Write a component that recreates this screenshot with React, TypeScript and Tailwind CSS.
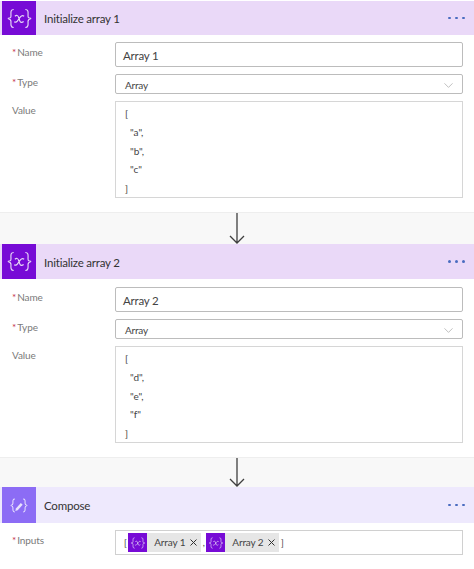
import React from 'react';
import { ChevronDown } from 'lucide-react';

const font = 'font-["Lato","Open_Sans",sans-serif]';

const Braces = () => (
  <>
    <path d="M7.5 3C4.8 3 5.4 5.6 5.4 7.6S5 9.6 3 10c2 .4 2.4 1 2.4 2.4S4.8 17 7.5 17" />
    <path d="M16.5 3c2.7 0 2.1 2.6 2.1 4.6s.4 2 2.4 2.4c-2 .4-2.4 1-2.4 2.4s.6 4.6-2.1 4.6" />
  </>
);

const VarGlyph = ({ size }: { size: number }) => (
  <svg width={size} height={size} viewBox="0 0 24 20" fill="none" stroke="#e6d8f6" strokeWidth="0.9">
    <Braces />
    <path d="M8.4 8.2c1.3-1 2.4-.7 2.8.6l1.1 3.2c.4 1.1 1.5 1.4 2.9.3M15.6 8.2c-1.2-.8-2.2-.3-2.9.6l-2.4 3.3c-.7.9-1.4 1-2.4.4" />
  </svg>
);

const VarIcon = ({ small = false }: { small?: boolean }) =>
  small ? (
    <span className="flex items-center justify-center w-[19px] h-[19px] bg-[#770bd6]">
      <VarGlyph size={18} />
    </span>
  ) : (
    <span className="flex items-center justify-center w-[34px] h-full bg-[#770bd6]">
      <VarGlyph size={31} />
    </span>
  );

const ComposeIcon = () => (
  <span className="flex items-center justify-center w-[34px] h-full bg-[#8c6cf5]">
    <svg width="22" height="19" viewBox="0 0 24 20" fill="none" stroke="#e8e2fc" strokeWidth="1.1">
      <Braces />
      <path d="M8.6 13.4l5.4-6 2 1.8-5.4 5.9-2.6.8z" fill="#e8e2fc" stroke="none" />
    </svg>
  </span>
);

const Dots = () => (
  <span className="flex gap-[4.5px] mr-[9.5px]">
    <span className="w-[2.5px] h-[2.5px] rounded-full bg-[#4a6cc0]" />
    <span className="w-[2.5px] h-[2.5px] rounded-full bg-[#4a6cc0]" />
    <span className="w-[2.5px] h-[2.5px] rounded-full bg-[#4a6cc0]" />
  </span>
);

const Header = ({
  title,
  light = false,
  height,
  icon,
}: {
  title: string;
  light?: boolean;
  height: string;
  icon: React.ReactNode;
}) => (
  <div className={`flex items-center pl-[2px] ${height} ${light ? 'bg-[#eee9fd]' : 'bg-[#ead9f8]'}`}>
    {icon}
    <span className="ml-[8px] flex-1 pt-[2px] text-[11.5px] tracking-[-0.2px] text-[#333]">{title}</span>
    <Dots />
  </div>
);

const Label = ({ text, required = false }: { text: string; required?: boolean }) => (
  <div className="w-[115px] pl-[12px] text-[10px] tracking-[-0.1px] leading-[14px] text-[#7a7a7a]">
    {required && <span className="text-[#c4314b] mr-px">*</span>}
    {text}
  </div>
);

const VariableCard = ({
  title,
  name,
  lines,
  headerHeight,
  top,
}: {
  title: string;
  name: string;
  lines: string[];
  headerHeight: string;
  top: string;
}) => (
  <div>
    <Header title={title} height={headerHeight} icon={<VarIcon />} />
    <div className={`pb-[14px] pr-[11px] flex flex-col gap-[7px] ${top}`}>
      <div className="flex">
        <div className="pt-[3px]"><Label text="Name" required /></div>
        <div className="flex-1 h-[25px] border border-[#bcbcbc] rounded-[2px] pl-[7px] pt-[2px] flex items-center text-[11.5px] tracking-[-0.2px] text-[#444]">
          {name}
        </div>
      </div>
      <div className="flex">
        <div className="pt-[1px]"><Label text="Type" required /></div>
        <div className="flex-1 h-[20px] border border-[#bcbcbc] rounded-[2px] pl-[9px] pr-[6px] flex items-center justify-between text-[10px] tracking-[-0.2px] text-[#444]">
          <span className="pt-[2px]">Array</span>
          <ChevronDown size={15} strokeWidth={1} className="mt-[2px] text-[#9a9a9a]" />
        </div>
      </div>
      <div className="flex">
        <div className="pt-[2px]"><Label text="Value" /></div>
        <div className="flex-1 h-[97px] border border-[#d6d6d6] pl-[9px] pt-[2px] text-[10px] leading-[18.75px] text-[#444]">
          <div>[</div>
          {lines.map((l) => (
            <div key={l} className="pl-[5px]">{l}</div>
          ))}
          <div>]</div>
        </div>
      </div>
    </div>
  </div>
);

const Connector = ({ height }: { height: number }) => (
  <div className="bg-[#f8f8f8] border-t border-[#eeeeee] flex justify-center" style={{ height }}>
    <svg width="18" height={height - 1} viewBox={`0 0 18 ${height - 1}`} fill="none" stroke="#3f3f3f" strokeWidth="1.3">
      <path d={`M9 0v${height - 2}M2 ${height - 9}l7 7 7-7`} />
    </svg>
  </div>
);

const Token = ({ label }: { label: string }) => (
  <span className="flex items-center h-[19px] bg-[#e6e6e6] text-[10px] tracking-[-0.15px] text-[#444]">
    <VarIcon small />
    <span className="ml-[7px]">{label}</span>
    <svg width="7" height="7" viewBox="0 0 7 7" stroke="#333" strokeWidth="1" className="ml-[5px] mr-[4px]">
      <path d="M.5.5l6 6M6.5.5l-6 6" />
    </svg>
  </span>
);

export default function App() {
  return (
    <div className={`w-[474px] h-[569px] bg-white pt-px overflow-hidden ${font}`}>
      <VariableCard
        title="Initialize array 1"
        name="Array 1"
        lines={['"a",', '"b",', '"c"']}
        headerHeight="h-[34px]"
        top="pt-[7px]"
      />
      <Connector height={32} />
      <VariableCard
        title="Initialize array 2"
        name="Array 2"
        lines={['"d",', '"e",', '"f"']}
        headerHeight="h-[35px]"
        top="pt-[8px]"
      />
      <Connector height={30} />
      <Header title="Compose" light height="h-[36px]" icon={<ComposeIcon />} />
      <div className="flex pt-[7px] pr-[11px]">
        <div className="pt-[3px]"><Label text="Inputs" required /></div>
        <div className="flex-1 h-[25px] border border-[#d0d0d0] pl-[8px] flex items-center gap-[1.5px] text-[9px] text-[#444]">
          [<Token label="Array 1" />,<Token label="Array 2" />]
        </div>
      </div>
    </div>
  );
}
